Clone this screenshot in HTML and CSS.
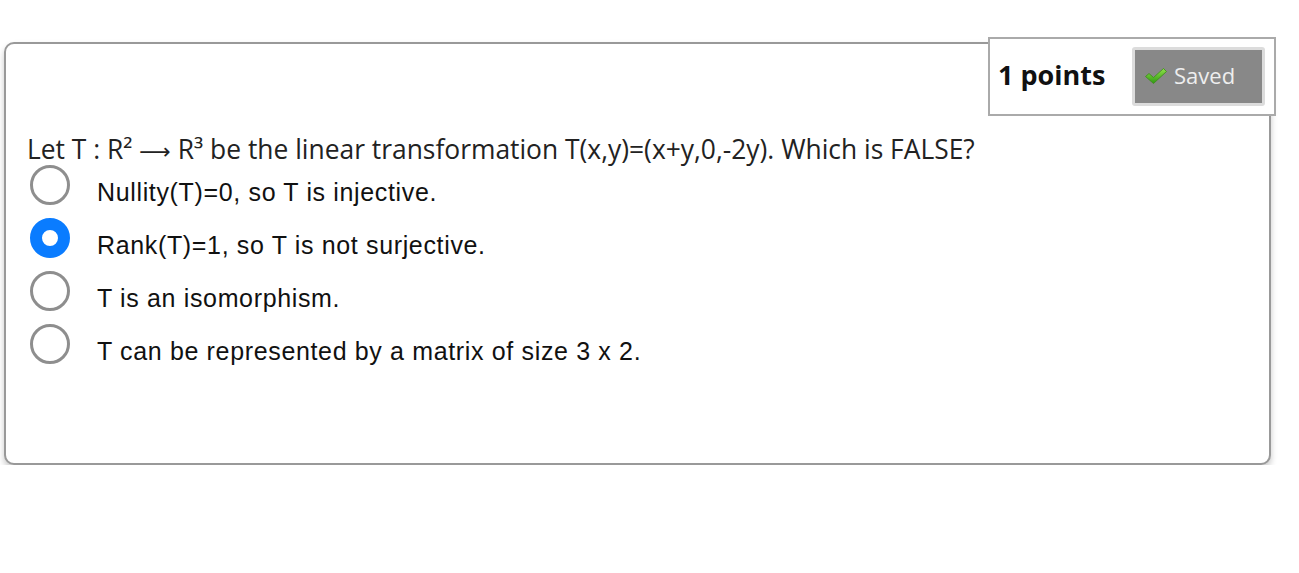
FILE: index.html
```html
<!DOCTYPE html>
<html>
<head>
<meta charset="utf-8">
<link rel="stylesheet" href="styles.css">
</head>
<body>
<div class="card">
  <div class="header">
    <div class="points-box">
      <span class="points">1 points</span>
      <span class="saved">
        <svg class="check" width="24" height="20" viewBox="0 0 24 20">
          <defs>
            <linearGradient id="g" x1="0" y1="0" x2="0" y2="1">
              <stop offset="0" stop-color="#8fe04a"/>
              <stop offset="1" stop-color="#2f9a12"/>
            </linearGradient>
          </defs>
          <path d="M1.5 10.5 L5 7.5 L9.5 11.5 L19.5 2.5 L22.5 5.5 L9.5 17.5 Z" fill="url(#g)" stroke="#3c8a1a" stroke-width="0.8" stroke-linejoin="round"/>
        </svg>
        Saved
      </span>
    </div>
  </div>
  <div class="question">Let T : R² <span class="arrow">⟶</span> R³ be the linear transformation T(x,y)=(x+y,0,-2y). Which is FALSE?</div>
  <div class="options">
    <label class="option"><span class="radio"></span><span class="opt-text">Nullity(T)=0, so T is injective.</span></label>
    <label class="option"><span class="radio selected"></span><span class="opt-text">Rank(T)=1, so T is not surjective.</span></label>
    <label class="option"><span class="radio"></span><span class="opt-text">T is an isomorphism.</span></label>
    <label class="option"><span class="radio"></span><span class="opt-text">T can be represented by a matrix of size 3 x 2.</span></label>
  </div>
</div>
</body>
</html>
```

FILE: styles.css
```css
html, body {
  margin: 0;
  padding: 0;
  background: #fff;
}
body {
  padding: 42px 0 0 4px;
  font-family: "Open Sans", sans-serif;
  color: #111;
}
.card {
  box-sizing: border-box;
  width: 1267px;
  height: 423px;
  border: 2px solid #999;
  border-radius: 10px;
  box-shadow: 0 4px 6px rgba(0,0,0,0.22);
  background: #fff;
}
.header {
  display: flex;
  justify-content: flex-end;
}
.points-box {
  box-sizing: border-box;
  width: 288px;
  height: 79px;
  margin: -7px -7px 0 0;
  border: 2px solid #aaa;
  background: #fff;
  display: flex;
  align-items: center;
  justify-content: space-between;
  padding: 0 9px 0 8px;
}
.points {
  font-weight: 700;
  font-size: 27px;
  color: #111;
  padding-bottom: 4px;
}
.saved {
  box-sizing: border-box;
  width: 133px;
  height: 59px;
  border: 3px solid #dcdcdc;
  border-radius: 3px;
  background: #888;
  color: #eee;
  font-size: 22px;
  display: flex;
  align-items: center;
  padding-left: 9px;
  padding-bottom: 4px;
  gap: 6px;
}
.check {
  display: block;
  margin-top: 3px;
}
.question {
  margin: 20px 0 0 21px;
  font-size: 26.4px;
  line-height: 26px;
  color: #222;
}
.arrow {
  font-family: "DejaVu Sans", sans-serif;
  font-size: 22px;
}
.options {
  display: flex;
  flex-direction: column;
  gap: 13px;
  padding-left: 24px;
}
.option {
  display: flex;
  align-items: flex-start;
  height: 40px;
}
.radio {
  box-sizing: border-box;
  width: 40px;
  height: 40px;
  border: 3px solid #8e8e8e;
  border-radius: 50%;
  flex: none;
  background: #fff;
}
.radio.selected {
  border: 12px solid #0a7cff;
  background: #fff;
}
.opt-text {
  margin-left: 27px;
  padding-top: 13px;
  font-family: "Liberation Sans", Arial, sans-serif;
  font-size: 25px;
  letter-spacing: 0.65px;
  color: #111;
}
```
